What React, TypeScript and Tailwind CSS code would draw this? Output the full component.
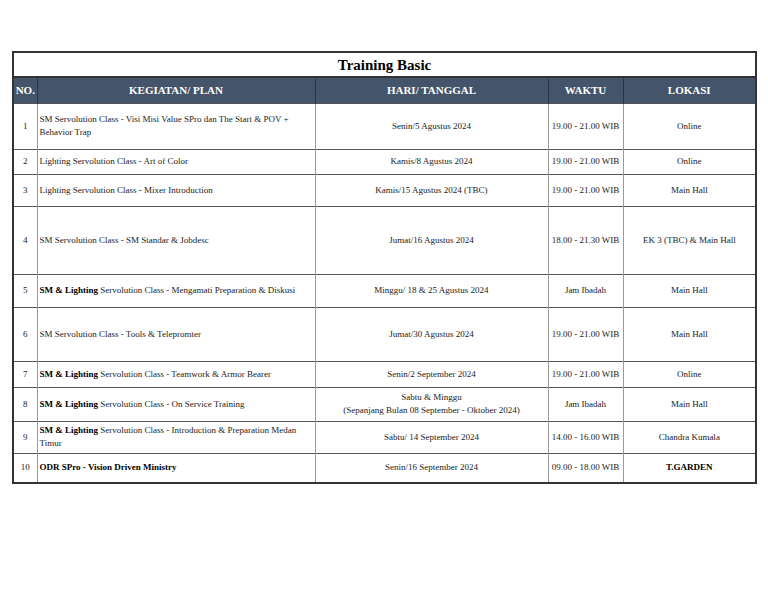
const rows = [
  { no: "1", bold: "", plan: "SM Servolution Class - Visi Misi Value SPro dan The Start & POV + Behavior Trap", date: ["Senin/5 Agustus 2024"], time: "19.00 - 21.00 WIB", loc: "Online", h: "h-[46px]" },
  { no: "2", bold: "", plan: "Lighting Servolution Class - Art of Color", date: ["Kamis/8 Agustus 2024"], time: "19.00 - 21.00 WIB", loc: "Online", h: "h-[25px]" },
  { no: "3", bold: "", plan: "Lighting Servolution Class - Mixer Introduction", date: ["Kamis/15 Agustus 2024 (TBC)"], time: "19.00 - 21.00 WIB", loc: "Main Hall", h: "h-[32px]" },
  { no: "4", bold: "", plan: "SM Servolution Class - SM Standar & Jobdesc", date: ["Jumat/16 Agustus 2024"], time: "18.00 - 21.30 WIB", loc: "EK 3 (TBC) & Main Hall", h: "h-[68px]" },
  { no: "5", bold: "SM & Lighting", plan: " Servolution Class - Mengamati Preparation & Diskusi", date: ["Minggu/ 18 & 25 Agustus 2024"], time: "Jam Ibadah", loc: "Main Hall", h: "h-[33px]" },
  { no: "6", bold: "", plan: "SM Servolution Class - Tools & Telepromter", date: ["Jumat/30 Agustus 2024"], time: "19.00 - 21.00 WIB", loc: "Main Hall", h: "h-[54px]" },
  { no: "7", bold: "SM & Lighting", plan: " Servolution Class - Teamwork & Armor Bearer", date: ["Senin/2 September 2024"], time: "19.00 - 21.00 WIB", loc: "Online", h: "h-[26px]" },
  { no: "8", bold: "SM & Lighting", plan: " Servolution Class - On Service Training", date: ["Sabtu & Minggu", "(Sepanjang Bulan 08 September - Oktober 2024)"], time: "Jam Ibadah", loc: "Main Hall", h: "h-[34px]" },
  { no: "9", bold: "SM & Lighting", plan: " Servolution Class - Introduction & Preparation Medan Timur", date: ["Sabtu/ 14 September 2024"], time: "14.00 - 16.00 WIB", loc: "Chandra Kumala", h: "h-[32px]" },
  { no: "10", bold: "ODR SPro - Vision Driven Ministry", plan: "", date: ["Senin/16 September 2024"], time: "09.00 - 18.00 WIB", loc: "T.GARDEN", h: "h-[30px]" },
];

export default function App() {
  return (
    <div className="w-[768px] h-[594px] bg-white pt-[51px] pl-[12px] font-['Liberation_Serif',serif] text-[#222]">
      <table className="w-[743px] table-fixed border-collapse border-2 border-[#333]">
        <colgroup>
          <col className="w-[24px]" />
          <col className="w-[278px]" />
          <col className="w-[233px]" />
          <col className="w-[75px]" />
          <col className="w-[133px]" />
        </colgroup>
        <thead>
          <tr className="h-[25px]">
            <th colSpan={5} className="border-b-2 border-[#333] text-[15px] font-bold text-black leading-none pt-[2px]">
              Training Basic
            </th>
          </tr>
          <tr className="h-[26px] bg-[#44546a] text-white text-[11px] font-bold">
            <th className="border-r border-[#2c3544]">NO.</th>
            <th className="border-r border-[#2c3544]">KEGIATAN/ PLAN</th>
            <th className="border-r border-[#2c3544]">HARI/ TANGGAL</th>
            <th className="border-r border-[#2c3544]">WAKTU</th>
            <th>LOKASI</th>
          </tr>
        </thead>
        <tbody className="text-[9px] leading-[13px]">
          {rows.map((r) => (
            <tr key={r.no} className={`${r.h} border-t border-[#555]`}>
              <td className="text-center border-r border-[#999]">{r.no}</td>
              <td className="px-[2px] border-r border-[#999]">
                {r.bold && <span className="font-bold text-black">{r.bold}</span>}
                {r.plan}
              </td>
              <td className="text-center border-r border-[#999]">
                {r.date.map((d) => (
                  <div key={d}>{d}</div>
                ))}
              </td>
              <td className="text-center border-r border-[#999] whitespace-nowrap">{r.time}</td>
              <td className={`text-center ${r.no === "10" ? "font-bold text-black" : ""}`}>{r.loc}</td>
            </tr>
          ))}
        </tbody>
      </table>
    </div>
  );
}
